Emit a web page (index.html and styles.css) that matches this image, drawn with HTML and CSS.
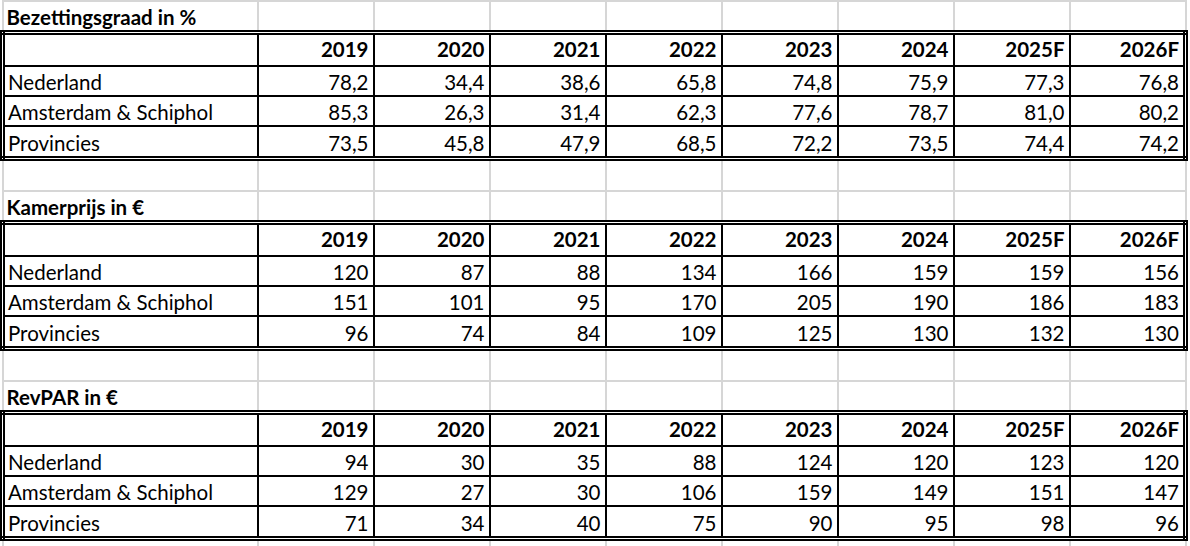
FILE: index.html
```html
<!DOCTYPE html>
<html lang="nl">
<head>
<meta charset="utf-8">
<title>Hotelcijfers</title>
<link rel="stylesheet" href="styles.css">
</head>
<body>
<table class="sheet">
  <colgroup>
    <col class="c-label">
    <col class="c-num"><col class="c-num"><col class="c-num"><col class="c-num">
    <col class="c-num"><col class="c-num"><col class="c-num"><col class="c-last">
  </colgroup>

  <tbody class="grid">
    <tr class="r-title"><td class="ttl">Bezettingsgraad in %</td><td></td><td></td><td></td><td></td><td></td><td></td><td></td><td></td></tr>
  </tbody>
  <tbody class="data">
    <tr class="r-head"><td></td><td>2019</td><td>2020</td><td>2021</td><td>2022</td><td>2023</td><td>2024</td><td>2025F</td><td>2026F</td></tr>
    <tr class="r-row"><td class="lbl">Nederland</td><td>78,2</td><td>34,4</td><td>38,6</td><td>65,8</td><td>74,8</td><td>75,9</td><td>77,3</td><td>76,8</td></tr>
    <tr class="r-row"><td class="lbl">Amsterdam &amp; Schiphol</td><td>85,3</td><td>26,3</td><td>31,4</td><td>62,3</td><td>77,6</td><td>78,7</td><td>81,0</td><td>80,2</td></tr>
    <tr class="r-last"><td class="lbl">Provincies</td><td>73,5</td><td>45,8</td><td>47,9</td><td>68,5</td><td>72,2</td><td>73,5</td><td>74,4</td><td>74,2</td></tr>
  </tbody>

  <tbody class="grid">
    <tr class="r-blank"><td></td><td></td><td></td><td></td><td></td><td></td><td></td><td></td><td></td></tr>
    <tr class="r-title"><td class="ttl">Kamerprijs in €</td><td></td><td></td><td></td><td></td><td></td><td></td><td></td><td></td></tr>
  </tbody>
  <tbody class="data">
    <tr class="r-head"><td></td><td>2019</td><td>2020</td><td>2021</td><td>2022</td><td>2023</td><td>2024</td><td>2025F</td><td>2026F</td></tr>
    <tr class="r-row"><td class="lbl">Nederland</td><td>120</td><td>87</td><td>88</td><td>134</td><td>166</td><td>159</td><td>159</td><td>156</td></tr>
    <tr class="r-row"><td class="lbl">Amsterdam &amp; Schiphol</td><td>151</td><td>101</td><td>95</td><td>170</td><td>205</td><td>190</td><td>186</td><td>183</td></tr>
    <tr class="r-last"><td class="lbl">Provincies</td><td>96</td><td>74</td><td>84</td><td>109</td><td>125</td><td>130</td><td>132</td><td>130</td></tr>
  </tbody>

  <tbody class="grid">
    <tr class="r-blank"><td></td><td></td><td></td><td></td><td></td><td></td><td></td><td></td><td></td></tr>
    <tr class="r-title"><td class="ttl">RevPAR in €</td><td></td><td></td><td></td><td></td><td></td><td></td><td></td><td></td></tr>
  </tbody>
  <tbody class="data">
    <tr class="r-head"><td></td><td>2019</td><td>2020</td><td>2021</td><td>2022</td><td>2023</td><td>2024</td><td>2025F</td><td>2026F</td></tr>
    <tr class="r-row"><td class="lbl">Nederland</td><td>94</td><td>30</td><td>35</td><td>88</td><td>124</td><td>120</td><td>123</td><td>120</td></tr>
    <tr class="r-row"><td class="lbl">Amsterdam &amp; Schiphol</td><td>129</td><td>27</td><td>30</td><td>106</td><td>159</td><td>149</td><td>151</td><td>147</td></tr>
    <tr class="r-last"><td class="lbl">Provincies</td><td>71</td><td>34</td><td>40</td><td>75</td><td>90</td><td>95</td><td>98</td><td>96</td></tr>
  </tbody>

  <tbody class="grid">
    <tr class="r-blank"><td></td><td></td><td></td><td></td><td></td><td></td><td></td><td></td><td></td></tr>
  </tbody>
</table>
</body>
</html>
```
FILE: styles.css
```css
html, body {
  margin: 0;
  padding: 0;
  background: #fff;
  overflow: hidden;
}

.sheet {
  border-collapse: collapse;
  table-layout: fixed;
  width: 1188px;
  margin: 0;
  font-family: Lato, "Liberation Sans", sans-serif;
  font-size: 20.5px;
  color: #000;
}

.c-label { width: 255px; }
.c-num { width: 116px; }

.sheet td {
  box-sizing: border-box;
  padding: 0 4px 0 3px;
  white-space: nowrap;
  overflow: hidden;
  vertical-align: bottom;
  line-height: 26px;
}

.grid td {
  border: 2px solid #d6d6d6;
}

.data {
  border: 5px double #000;
}

.data td {
  border: 2px solid #000;
  text-align: right;
}

.data td.lbl {
  text-align: left;
}

.r-head td {
  font-weight: 700;
  vertical-align: middle;
  padding-bottom: 1px;
}

.ttl {
  font-weight: 700;
}

.r-title td { height: 31px; }
.r-head td { height: 34px; }
.r-row td { height: 30px; }
.r-last td { height: 32px; }
.r-blank td { height: 33px; }
```
